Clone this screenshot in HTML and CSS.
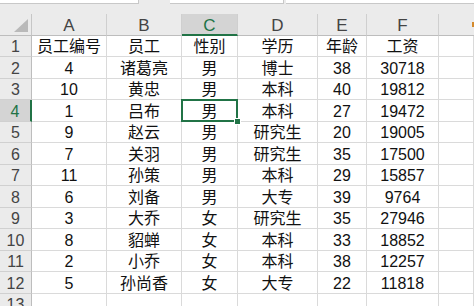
FILE: index.html
```html
<!DOCTYPE html>
<html lang="zh-CN">

<head>
  <meta charset="UTF-8" />
  <meta name="viewport" content="width=device-width, initial-scale=1.0" />
  <title>员工表</title>
  <link rel="stylesheet" href="styles.css">
</head>

<body>

  <div class="sheet">
    <!-- formula bar edge -->
    <div class="topbar">
      <div class="box name-box"></div>
      <div class="box fx-box"></div>
      <div class="box formula-box"></div>
    </div>

    <!-- column headers -->
    <div class="row head-row">
      <div class="corner"><span class="tri"></span></div>
      <div class="col-hd">A</div>
      <div class="col-hd">B</div>
      <div class="col-hd active">C</div>
      <div class="col-hd">D</div>
      <div class="col-hd">E</div>
      <div class="col-hd">F</div>
      <div class="col-hd last"><span class="mark"></span></div>
    </div>

    <div class="row">
      <div class="row-hd">1</div>
      <div class="cell">员工编号</div><div class="cell">员工</div><div class="cell">性别</div>
      <div class="cell">学历</div><div class="cell">年龄</div><div class="cell">工资</div><div class="cell"></div>
    </div>
    <div class="row">
      <div class="row-hd">2</div>
      <div class="cell">4</div><div class="cell">诸葛亮</div><div class="cell">男</div>
      <div class="cell">博士</div><div class="cell">38</div><div class="cell">30718</div><div class="cell"></div>
    </div>
    <div class="row">
      <div class="row-hd">3</div>
      <div class="cell">10</div><div class="cell">黄忠</div><div class="cell">男</div>
      <div class="cell">本科</div><div class="cell">40</div><div class="cell">19812</div><div class="cell"></div>
    </div>
    <div class="row">
      <div class="row-hd active">4</div>
      <div class="cell">1</div><div class="cell">吕布</div><div class="cell selected">男</div>
      <div class="cell">本科</div><div class="cell">27</div><div class="cell">19472</div><div class="cell"></div>
    </div>
    <div class="row">
      <div class="row-hd">5</div>
      <div class="cell">9</div><div class="cell">赵云</div><div class="cell">男</div>
      <div class="cell">研究生</div><div class="cell">20</div><div class="cell">19005</div><div class="cell"></div>
    </div>
    <div class="row">
      <div class="row-hd">6</div>
      <div class="cell">7</div><div class="cell">关羽</div><div class="cell">男</div>
      <div class="cell">研究生</div><div class="cell">35</div><div class="cell">17500</div><div class="cell"></div>
    </div>
    <div class="row">
      <div class="row-hd">7</div>
      <div class="cell">11</div><div class="cell">孙策</div><div class="cell">男</div>
      <div class="cell">本科</div><div class="cell">29</div><div class="cell">15857</div><div class="cell"></div>
    </div>
    <div class="row">
      <div class="row-hd">8</div>
      <div class="cell">6</div><div class="cell">刘备</div><div class="cell">男</div>
      <div class="cell">大专</div><div class="cell">39</div><div class="cell">9764</div><div class="cell"></div>
    </div>
    <div class="row">
      <div class="row-hd">9</div>
      <div class="cell">3</div><div class="cell">大乔</div><div class="cell">女</div>
      <div class="cell">研究生</div><div class="cell">35</div><div class="cell">27946</div><div class="cell"></div>
    </div>
    <div class="row">
      <div class="row-hd">10</div>
      <div class="cell">8</div><div class="cell">貂蝉</div><div class="cell">女</div>
      <div class="cell">本科</div><div class="cell">33</div><div class="cell">18852</div><div class="cell"></div>
    </div>
    <div class="row">
      <div class="row-hd">11</div>
      <div class="cell">2</div><div class="cell">小乔</div><div class="cell">女</div>
      <div class="cell">本科</div><div class="cell">38</div><div class="cell">12257</div><div class="cell"></div>
    </div>
    <div class="row">
      <div class="row-hd">12</div>
      <div class="cell">5</div><div class="cell">孙尚香</div><div class="cell">女</div>
      <div class="cell">大专</div><div class="cell">22</div><div class="cell">11818</div><div class="cell"></div>
    </div>
    <div class="row">
      <div class="row-hd">13</div>
      <div class="cell"></div><div class="cell"></div><div class="cell"></div>
      <div class="cell"></div><div class="cell"></div><div class="cell"></div><div class="cell"></div>
    </div>
  </div>

</body>

</html>
```

FILE: styles.css
```css
body {
  margin: 0;
  background: #ffffff;
  font-family: 'Liberation Sans', 'Noto Sans CJK SC', sans-serif;
  overflow: hidden;
}

.sheet {
  width: 474px;
  height: 306px;
  overflow: hidden;
  background: #ffffff;
}

.topbar {
  display: flex;
  height: 14px;
  background: #ebebeb;
}

.box {
  height: 4px;
  box-sizing: border-box;
  background: #ffffff;
  border-bottom: 1px solid #c8c8c8;
  border-right: 1px solid #c8c8c8;
}

.name-box {
  width: 139px;
}

.fx-box {
  width: 114px;
  margin-left: 31px;
}

.formula-box {
  flex: 1;
  margin-left: 2px;
  border-right: none;
}

.row {
  display: grid;
  grid-template-columns: 32px 75px 75px 56px 80px 49px 72px 1fr;
  height: 22px;
}

.row:nth-child(odd) {
  height: 21px;
}

.head-row {
  height: 22px;
  background: #ebebeb;
}

.corner,
.col-hd,
.row-hd,
.cell {
  box-sizing: border-box;
  display: flex;
  align-items: center;
  justify-content: center;
  font-size: 16px;
  line-height: 1;
  padding-top: 2px;
}

.corner {
  justify-content: flex-end;
  align-items: flex-end;
  padding: 0 3px 3px 0;
  border-right: 1px solid #c6c6c6;
  border-bottom: 1px solid #bdbdbd;
}

.tri {
  width: 0;
  height: 0;
  border-left: 14px solid transparent;
  border-bottom: 13px solid #b9b9b9;
}

.col-hd {
  color: #444;
  font-size: 17px;
  border-right: 1px solid #cfcfcf;
  border-bottom: 1px solid #bdbdbd;
}

.col-hd.active {
  background: #d4d4d4;
  color: #217346;
  border-bottom: 2px solid #217346;
}

.col-hd.last {
  position: relative;
  border-right: none;
}

.mark {
  position: absolute;
  right: 0;
  top: 8px;
  width: 2px;
  height: 5px;
  background: #d48a2c;
}

.row-hd {
  background: #ebebeb;
  color: #444;
  border-right: 1px solid #bdbdbd;
  border-bottom: 1px solid #d0d0d0;
}

.row-hd.active {
  background: #d4d4d4;
  color: #217346;
  border-right: 2px solid #217346;
}

.cell {
  color: #111;
  border-right: 1px solid #dadada;
  border-bottom: 1px solid #dadada;
}

.selected {
  position: relative;
}

.selected::before {
  content: "";
  position: absolute;
  left: -1px;
  top: -1px;
  right: -1px;
  bottom: -1px;
  border: 2px solid #217346;
}

.selected::after {
  content: "";
  position: absolute;
  right: -4px;
  bottom: -4px;
  width: 5px;
  height: 5px;
  background: #217346;
  border: 1px solid #ffffff;
}
```
